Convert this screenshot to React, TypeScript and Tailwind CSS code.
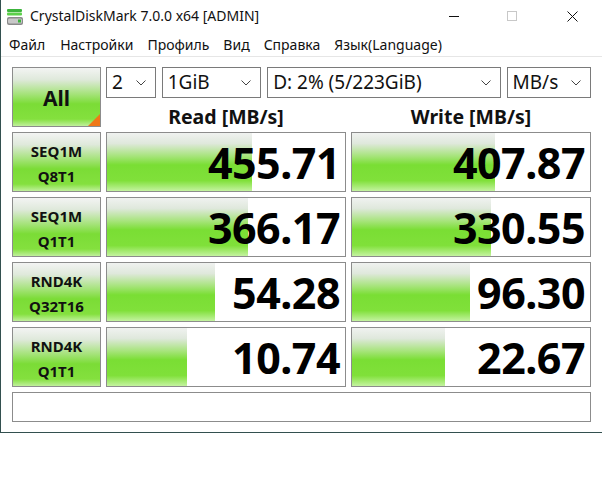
import React from "react";

const rows = [
  { l1: "SEQ1M", l2: "Q8T1", r: "455.71", rw: 145, w: "407.87", ww: 143 },
  { l1: "SEQ1M", l2: "Q1T1", r: "366.17", rw: 141, w: "330.55", ww: 139 },
  { l1: "RND4K", l2: "Q32T16", r: "54.28", rw: 108, w: "96.30", ww: 118 },
  { l1: "RND4K", l2: "Q1T1", r: "10.74", rw: 80, w: "22.67", ww: 93 },
];

const font = { fontFamily: '"Noto Sans", "Open Sans", sans-serif' };

function Chevron() {
  return (
    <svg width="10" height="6" viewBox="0 0 10 6" className="shrink-0">
      <path d="M0.5 0.5 L5 5 L9.5 0.5" fill="none" stroke="#444" strokeWidth="1" />
    </svg>
  );
}

function Select({ w, text }: { w: string; text: string }) {
  return (
    <div className={`${w} h-[31px] border border-[#7a7a7a] bg-white flex items-center justify-between pl-[5px] pr-[9px]`}>
      <span className="text-[19px] leading-none text-[#111]">{text}</span>
      <Chevron />
    </div>
  );
}

function Cell({ value, bar }: { value: string; bar: number }) {
  return (
    <div className="relative h-[60px] border border-[#8c8c8c] bg-white flex items-center justify-end pr-[5px] overflow-hidden">
      <div
        className="absolute left-0 top-0 bottom-0 bg-[linear-gradient(to_bottom,#f0f2f0_0%,#dfe8dc_18%,#a6e47a_40%,#7ade34_55%,#80e03a_82%,#c4f3a0_100%)]"
        style={{ width: bar }}
      />
      <span className="relative text-[43px] font-bold leading-none text-black tracking-[-0.5px]">{value}</span>
    </div>
  );
}

function Label({ l1, l2 }: { l1: string; l2: string }) {
  return (
    <div className="h-[60px] border border-[#8c8c8c] bg-[linear-gradient(to_bottom,#f3f4f3_0%,#dfe9db_20%,#a5e37a_45%,#7bdc36_62%,#84e03e_88%,#c0f09c_100%)] flex flex-col items-center justify-center gap-[5px] pt-[2px]">
      <span className="text-[15px] font-bold leading-[20px] text-[#111]">{l1}</span>
      <span className="text-[15px] font-bold leading-[20px] text-[#111]">{l2}</span>
    </div>
  );
}

export default function App() {
  return (
    <div className="w-[602px] h-[480px] bg-white" style={font}>
      <div className="h-[433px] border-l border-b border-[#33504f] flex flex-col">
        {/* title bar */}
        <div className="h-[32px] flex items-center shrink-0">
          <svg width="18" height="18" viewBox="0 0 18 18" className="ml-[5px] mr-[6px] mt-[1px]">
            <rect x="1" y="1" width="15" height="3" rx="1" fill="#3cb43c" />
            <rect x="1" y="4.5" width="15" height="3" rx="1" fill="#5cd04a" />
            <rect x="1" y="9" width="16" height="8" rx="2" fill="#8a8a8a" />
            <rect x="2" y="10.5" width="14" height="5" rx="1.5" fill="#c8c8c8" />
            <rect x="12" y="11.5" width="3" height="3" fill="#3cb43c" />
          </svg>
          <span className="text-[14px] text-[#111] leading-none">CrystalDiskMark 7.0.0 x64 [ADMIN]</span>
          <div className="ml-auto flex items-center h-full">
            <div className="w-[46px] h-full flex items-center justify-center">
              <div className="w-[10px] h-px bg-[#111]" />
            </div>
            <div className="w-[46px] h-full flex items-center justify-center ml-[12px]">
              <div className="w-[10px] h-[10px] border border-[#c8c8c8]" />
            </div>
            <div className="w-[46px] h-full flex items-center justify-center mr-[7px] ml-[14px]">
              <svg width="11" height="11" viewBox="0 0 11 11">
                <path d="M0.5 0.5 L10.5 10.5 M10.5 0.5 L0.5 10.5" stroke="#111" strokeWidth="1" />
              </svg>
            </div>
          </div>
        </div>
        {/* menu */}
        <div className="h-[25px] flex items-center border-b border-[#e6e6e6] text-[14px] text-[#111] shrink-0">
          <span className="ml-[8px]">Файл</span>
          <span className="ml-[15px]">Настройки</span>
          <span className="ml-[14px]">Профиль</span>
          <span className="ml-[14px]">Вид</span>
          <span className="ml-[14px]">Справка</span>
          <span className="ml-[14px]">Язык(Language)</span>
        </div>
        {/* client */}
        <div className="pl-[11px] pt-[10px] flex flex-col gap-[5px]">
          <div className="grid grid-cols-[89px_240px_240px] gap-x-[5px]">
            <div className="relative h-[60px] border border-[#8c8c8c] bg-[linear-gradient(to_bottom,#f3f4f3_0%,#dfe9db_20%,#a5e37a_45%,#7bdc36_62%,#84e03e_88%,#c0f09c_100%)] flex items-center justify-center overflow-hidden">
              <span className="text-[21px] font-bold text-[#111] leading-none pt-[2px]">All</span>
              <div className="absolute right-0 bottom-0 w-0 h-0 border-l-[12px] border-l-transparent border-b-[12px] border-b-[#f07818]" />
            </div>
            <div className="col-span-2 flex flex-col">
              <div className="flex gap-[6px]">
                <Select w="w-[50px]" text="2" />
                <Select w="w-[100px]" text="1GiB" />
                <Select w="w-[235px]" text="D: 2% (5/223GiB)" />
                <Select w="w-[85px]" text="MB/s" />
              </div>
              <div className="grid grid-cols-[240px_240px] gap-x-[5px] flex-1">
                <div className="flex items-end justify-center text-[19.5px] font-bold text-[#111] leading-none pb-[1px]">Read [MB/s]</div>
                <div className="flex items-end justify-center text-[19.5px] font-bold text-[#111] leading-none pb-[1px]">Write [MB/s]</div>
              </div>
            </div>
          </div>
          {rows.map((r, i) => (
            <div key={i} className="grid grid-cols-[89px_240px_240px] gap-x-[5px]">
              <Label l1={r.l1} l2={r.l2} />
              <Cell value={r.r} bar={r.rw} />
              <Cell value={r.w} bar={r.ww} />
            </div>
          ))}
          <div className="w-[579px] h-[30px] border border-[#8c8c8c] bg-white" />
        </div>
      </div>
    </div>
  );
}
